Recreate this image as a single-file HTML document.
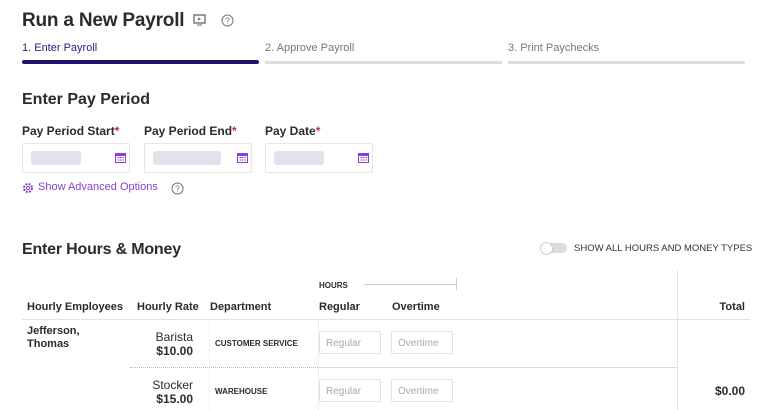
<!DOCTYPE html>
<html><head><style>
body{margin:0;width:770px;height:410px;overflow:hidden;background:#fff;font-family:"Liberation Sans",sans-serif;color:#2b2b2b;position:relative}
div,span{position:absolute}
.b{font-weight:bold}
.lbl{font-size:12px;font-weight:bold;top:124px}
.inp{border:1px solid #e6e6e6;height:28px;width:106px;top:143px;border-radius:2px}
.pill{left:8px;top:7px;width:50px;height:14px;background:#e4e1ec;border-radius:3px}
.cal{right:3px;top:8px}
.hd{font-size:11px;font-weight:bold;top:301px}
.box{border:1px solid #e2e2e2;height:23px;border-radius:2px;font-size:10px;color:#aaa;line-height:23px;padding-left:6px;box-sizing:border-box}
.r{text-align:right;font-size:12px}
.dept{font-size:8px;font-weight:bold;left:215px}
.star{color:#d0283a}
</style></head><body>
<div class="b" style="left:22px;top:10px;font-size:19px;letter-spacing:-0.2px">Run a New Payroll</div>
<svg style="position:absolute;left:193px;top:14px" width="14" height="12"><rect x="1" y="1" width="11" height="8" fill="none" stroke="#666" stroke-width="1.3"/><path d="M5 3.5 L8 5 L5 6.5Z" fill="#666"/><line x1="4" y1="11" x2="9" y2="11" stroke="#666"/></svg>
<svg style="position:absolute;left:221px;top:14px" width="13" height="13"><circle cx="6.5" cy="6.5" r="5.5" fill="none" stroke="#777"/><text x="6.5" y="9.5" font-size="8" text-anchor="middle" fill="#777" font-family="Liberation Sans">?</text></svg>
<div style="left:22px;top:42px;font-size:11px;color:#2a1a7a">1. Enter Payroll</div>
<div style="left:265px;top:42px;font-size:11px;color:#777">2. Approve Payroll</div>
<div style="left:508px;top:42px;font-size:11px;color:#777">3. Print Paychecks</div>
<div style="left:22px;top:60px;width:237px;height:4px;background:#24106e;border-radius:2px"></div>
<div style="left:265px;top:61px;width:237px;height:3px;background:#ddd"></div>
<div style="left:508px;top:61px;width:237px;height:3px;background:#ddd"></div>
<div class="b" style="left:22px;top:91px;font-size:16px">Enter Pay Period</div>
<div class="lbl" style="left:22px">Pay Period Start<span class="star" style="position:static">*</span></div>
<div class="lbl" style="left:144px">Pay Period End<span class="star" style="position:static">*</span></div>
<div class="lbl" style="left:265px">Pay Date<span class="star" style="position:static">*</span></div>
<div class="inp" style="left:22px"><div class="pill"></div><svg class="cal" style="position:absolute" width="11" height="11"><rect x="0.5" y="1.5" width="10" height="9" fill="#fff" stroke="#8a3fd1"/><rect x="0.5" y="1.5" width="10" height="2.5" fill="#8a3fd1"/><path d="M2.5 5.5h2M5 5.5h1.5M7.5 5.5h1.5M2.5 8h2M5 8h1.5M7.5 8h1.5" stroke="#8a3fd1"/></svg></div>
<div class="inp" style="left:144px"><div class="pill" style="width:68px"></div><svg class="cal" style="position:absolute" width="11" height="11"><rect x="0.5" y="1.5" width="10" height="9" fill="#fff" stroke="#8a3fd1"/><rect x="0.5" y="1.5" width="10" height="2.5" fill="#8a3fd1"/><path d="M2.5 5.5h2M5 5.5h1.5M7.5 5.5h1.5M2.5 8h2M5 8h1.5M7.5 8h1.5" stroke="#8a3fd1"/></svg></div>
<div class="inp" style="left:265px"><div class="pill"></div><svg class="cal" style="position:absolute" width="11" height="11"><rect x="0.5" y="1.5" width="10" height="9" fill="#fff" stroke="#8a3fd1"/><rect x="0.5" y="1.5" width="10" height="2.5" fill="#8a3fd1"/><path d="M2.5 5.5h2M5 5.5h1.5M7.5 5.5h1.5M2.5 8h2M5 8h1.5M7.5 8h1.5" stroke="#8a3fd1"/></svg></div>
<svg style="position:absolute;left:22px;top:182px" width="12" height="12"><circle cx="6" cy="6" r="4" fill="none" stroke="#8a3fd1" stroke-width="2" stroke-dasharray="2 1.2"/><circle cx="6" cy="6" r="1.6" fill="none" stroke="#8a3fd1"/></svg>
<div style="left:38px;top:181px;font-size:11px;color:#8a3fd1">Show Advanced Options</div>
<svg style="position:absolute;left:171px;top:182px" width="13" height="13"><circle cx="6.5" cy="6.5" r="5.5" fill="none" stroke="#777"/><text x="6.5" y="9.5" font-size="8" text-anchor="middle" fill="#777" font-family="Liberation Sans">?</text></svg>
<div class="b" style="left:22px;top:241px;font-size:16px;letter-spacing:-0.2px">Enter Hours &amp; Money</div>
<div style="left:540px;top:243px;width:27px;height:10px;background:#ddd;border-radius:6px"></div>
<div style="left:540px;top:242px;width:11px;height:11px;background:#fff;border:1px solid #ccc;border-radius:50%"></div>
<div style="left:574px;top:243px;font-size:9.5px;color:#333">SHOW ALL HOURS AND MONEY TYPES</div>
<div style="left:319px;top:281px;font-size:8px;font-weight:bold">HOURS</div>
<div style="left:364px;top:284px;width:92px;height:1px;background:#ccc"></div>
<div style="left:456px;top:278px;width:1px;height:12px;background:#ccc"></div>
<div style="left:677px;top:270px;width:1px;height:140px;background:#e6e6e6"></div>
<div class="hd" style="left:27px">Hourly Employees</div>
<div class="hd" style="left:137px">Hourly Rate</div>
<div class="hd" style="left:210px">Department</div>
<div class="hd" style="left:319px">Regular</div>
<div class="hd" style="left:392px">Overtime</div>
<div class="hd" style="right:25px">Total</div>
<div style="left:22px;top:319px;width:728px;height:1px;background:#e2e2e2"></div>
<div style="left:318px;top:320px;width:1px;height:90px;background:#eee"></div>
<div style="left:209px;top:320px;width:1px;height:90px;background:#f4f4f4"></div>
<div style="left:27px;top:325px;font-size:11px;font-weight:bold;line-height:13px">Jefferson,<br>Thomas</div>
<div class="r" style="right:577px;top:330px;line-height:14px">Barista<br><b>$10.00</b></div>
<div class="dept" style="top:339px">CUSTOMER SERVICE</div>
<div class="box" style="left:319px;top:331px;width:62px">Regular</div>
<div class="box" style="left:391px;top:331px;width:62px">Overtime</div>
<div style="left:130px;top:367px;width:188px;border-top:1px dotted #bbb"></div>
<div style="left:318px;top:367px;width:359px;height:1px;background:#ddd"></div>
<div class="r" style="right:577px;top:378px;line-height:14px">Stocker<br><b>$15.00</b></div>
<div class="dept" style="top:387px">WAREHOUSE</div>
<div class="box" style="left:319px;top:379px;width:62px">Regular</div>
<div class="box" style="left:391px;top:379px;width:62px">Overtime</div>
<div class="r" style="right:25px;top:384px;font-weight:bold">$0.00</div>
</body></html>
